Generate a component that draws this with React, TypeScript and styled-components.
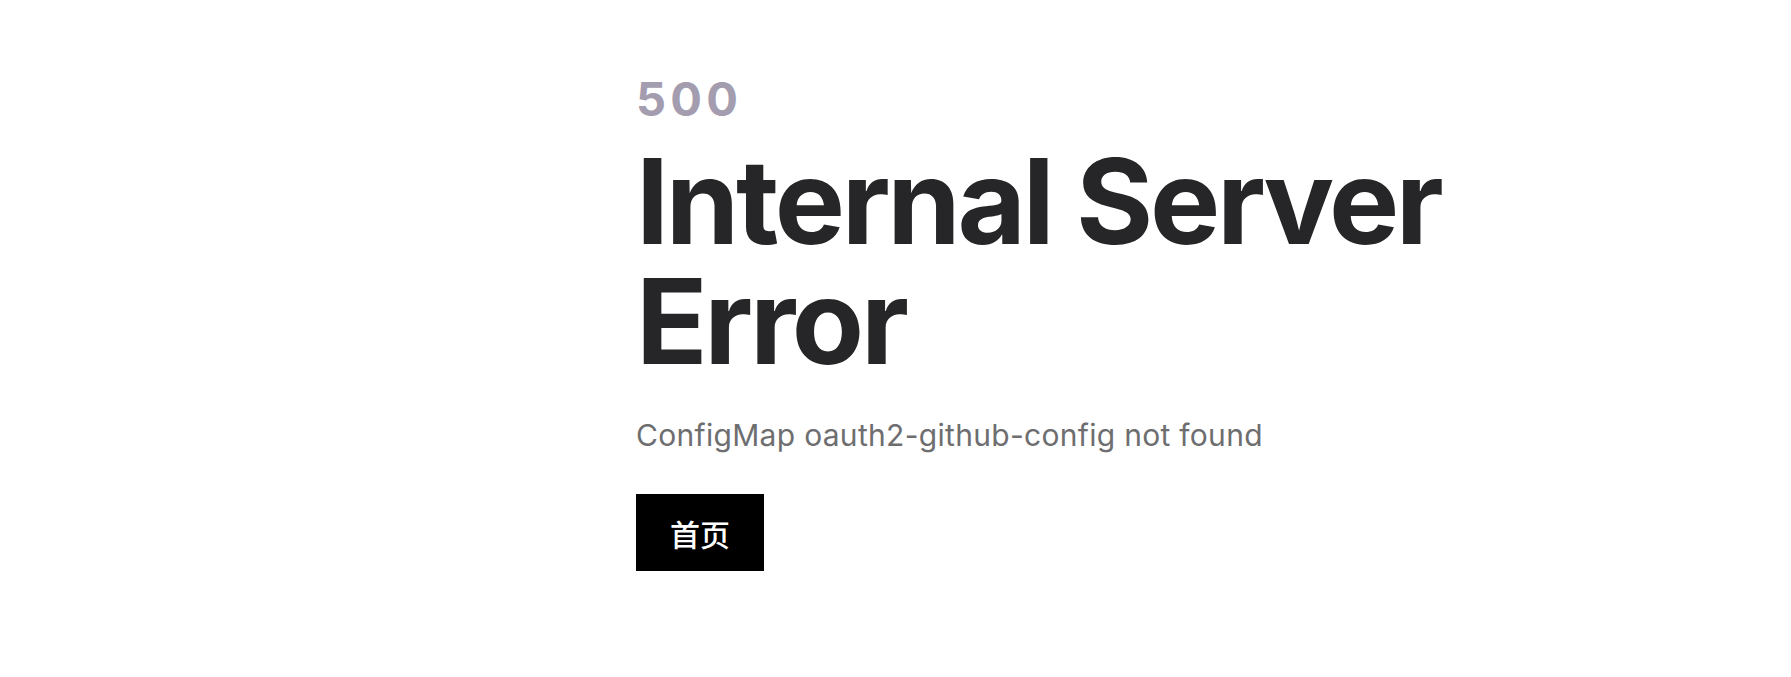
import React from "react";
import styled, { createGlobalStyle } from "styled-components";

const Global = createGlobalStyle`
  html, body { margin: 0; padding: 0; background: #ffffff; }
  body { font-family: Inter, "Noto Sans", "Noto Sans CJK SC", sans-serif; }
`;

const Page = styled.main`
  min-height: 677px;
  box-sizing: border-box;
  padding: 71px 0 0 636px;
`;

const Content = styled.section`
  width: 900px;
  display: flex;
  flex-direction: column;
  align-items: flex-start;
`;

const Code = styled.div`
  font-size: 47px;
  line-height: 56px;
  font-weight: 700;
  letter-spacing: 0.09em;
  color: #a39daf;
`;

const Title = styled.h1`
  margin: 14px 0 0;
  font-size: 118px;
  line-height: 120px;
  font-weight: 700;
  letter-spacing: -0.028em;
  color: #262628;
`;

const Message = styled.p`
  margin: 32px 0 0;
  font-size: 30px;
  line-height: 45px;
  letter-spacing: 0.01em;
  color: #6e6e70;
`;

const HomeButton = styled.a`
  margin-top: 36px;
  display: inline-flex;
  align-items: center;
  justify-content: center;
  width: 128px;
  height: 77px;
  background: #000;
  color: #fff;
  font-family: "Noto Sans CJK SC", sans-serif;
  font-size: 30px;
  font-weight: 500;
  text-decoration: none;
`;

export default function App() {
  return (
    <>
      <Global />
      <Page>
        <Content>
          <Code>500</Code>
          <Title>Internal Server Error</Title>
          <Message>ConfigMap oauth2-github-config not found</Message>
          <HomeButton href="#">首页</HomeButton>
        </Content>
      </Page>
    </>
  );
}
